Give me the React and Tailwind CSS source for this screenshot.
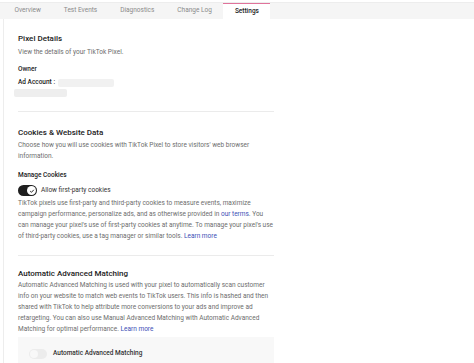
import React, { useState } from "react";

const tabs = ["Overview", "Test Events", "Diagnostics", "Change Log", "Settings"];

const Toggle = ({ on, onClick }) => (
  <button
    type="button"
    onClick={onClick}
    className={
      "relative shrink-0 rounded-full " +
      (on ? "h-[11px] w-[19px] bg-[#1f1f1f]" : "h-[10px] w-[18px] bg-[#ececec]")
    }
  >
    {on ? (
      <span className="absolute right-[1px] top-[1px] flex h-[9px] w-[9px] items-center justify-center rounded-full bg-white">
        <svg viewBox="0 0 10 10" className="h-[6px] w-[6px]">
          <path d="M2 5.2 4.1 7.2 8 3" fill="none" stroke="#1f1f1f" strokeWidth="1.6" />
        </svg>
      </span>
    ) : (
      <span className="absolute left-[1px] top-[1px] h-[8px] w-[8px] rounded-full bg-[#f8f8f8]" />
    )}
  </button>
);

const Link = ({ children }) => <a className="text-[#3d50b6]">{children}</a>;

export default function App() {
  const [active, setActive] = useState("Settings");
  const [cookies, setCookies] = useState(true);
  const [aam, setAam] = useState(false);

  return (
    <div className="min-h-[363px] overflow-hidden bg-white pt-[2px] font-['Roboto',sans-serif] text-[#222]">
      <div className="flex h-[17px] border-t border-[#ededed] bg-[#f5f5f5] pl-[3px]">
        {tabs.map((t) => (
          <button
            key={t}
            onClick={() => setActive(t)}
            className={
              "flex h-full items-center px-[11.5px] text-[6.5px] " +
              (active === t
                ? "border-t-[1.5px] border-[#e0739b] bg-white font-medium text-[#222]"
                : "text-[#8a8a8a]")
            }
          >
            {t}
          </button>
        ))}
      </div>

      <div className="ml-[3px] border-l border-[#ededed] pl-[14px] pt-[14px]">
        <div className="w-[256px]">
          <section className="pb-[14px]">
            <h2 className="text-[8px] font-medium leading-[11px]">Pixel Details</h2>
            <p className="mt-[3px] text-[6.5px] leading-[11px] text-[#6d6d6d]">
              View the details of your TikTok Pixel.
            </p>
            <div className="mt-[6px] text-[6.5px] font-medium leading-[11px]">Owner</div>
            <div className="mt-[2px] flex items-center gap-[3px] text-[6.5px] font-medium leading-[11px]">
              Ad Account :
              <span className="h-[8px] w-[56px] rounded-[2px] bg-[#f1f1f1]" />
            </div>
            <div className="-ml-[4px] mt-[1px] h-[8px] w-[53px] rounded-[2px] bg-[#eeeeee]" />
          </section>

          <div className="border-t border-[#ebebeb]" />

          <section className="pb-[13px] pt-[15px]">
            <h2 className="text-[8px] font-medium leading-[11px]">Cookies &amp; Website Data</h2>
            <p className="mt-[2px] text-[6.5px] leading-[11px] text-[#6d6d6d]">
              Choose how you will use cookies with TikTok Pixel to store visitors' web browser information.
            </p>
            <div className="mt-[8px] text-[6.5px] font-medium leading-[11px]">Manage Cookies</div>
            <div className="mt-[4px] flex items-center gap-[4px]">
              <Toggle on={cookies} onClick={() => setCookies(!cookies)} />
              <span className="text-[6.5px] leading-[11px] text-[#333]">Allow first-party cookies</span>
            </div>
            <p className="mt-[2px] text-[6.5px] leading-[11px] text-[#6d6d6d]">
              TikTok pixels use first-party and third-party cookies to measure events, maximize campaign
              performance, personalize ads, and as otherwise provided in <Link>our terms</Link>. You can
              manage your pixel's use of first-party cookies at anytime. To manage your pixel's use of
              third-party cookies, use a tag manager or similar tools. <Link>Learn more</Link>
            </p>
          </section>

          <div className="border-t border-[#ebebeb]" />

          <section className="pt-[12px]">
            <h2 className="text-[8px] font-medium leading-[11px]">Automatic Advanced Matching</h2>
            <p className="mt-[1px] text-[6.5px] leading-[11px] text-[#6d6d6d]">
              Automatic Advanced Matching is used with your pixel to automatically scan customer info on
              your website to match web events to TikTok users. This info is hashed and then shared with
              TikTok to help attribute more conversions to your ads and improve ad retargeting. You can also
              use Manual Advanced Matching with Automatic Advanced Matching for optimal performance.{" "}
              <Link>Learn more</Link>
            </p>
            <div className="mt-[2px] flex items-center gap-[6px] bg-[#f8f8f8] px-[11px] py-[11px]">
              <Toggle on={aam} onClick={() => setAam(!aam)} />
              <span className="text-[6.5px] font-medium leading-[11px] text-[#333]">
                Automatic Advanced Matching
              </span>
            </div>
          </section>
        </div>
      </div>
    </div>
  );
}
